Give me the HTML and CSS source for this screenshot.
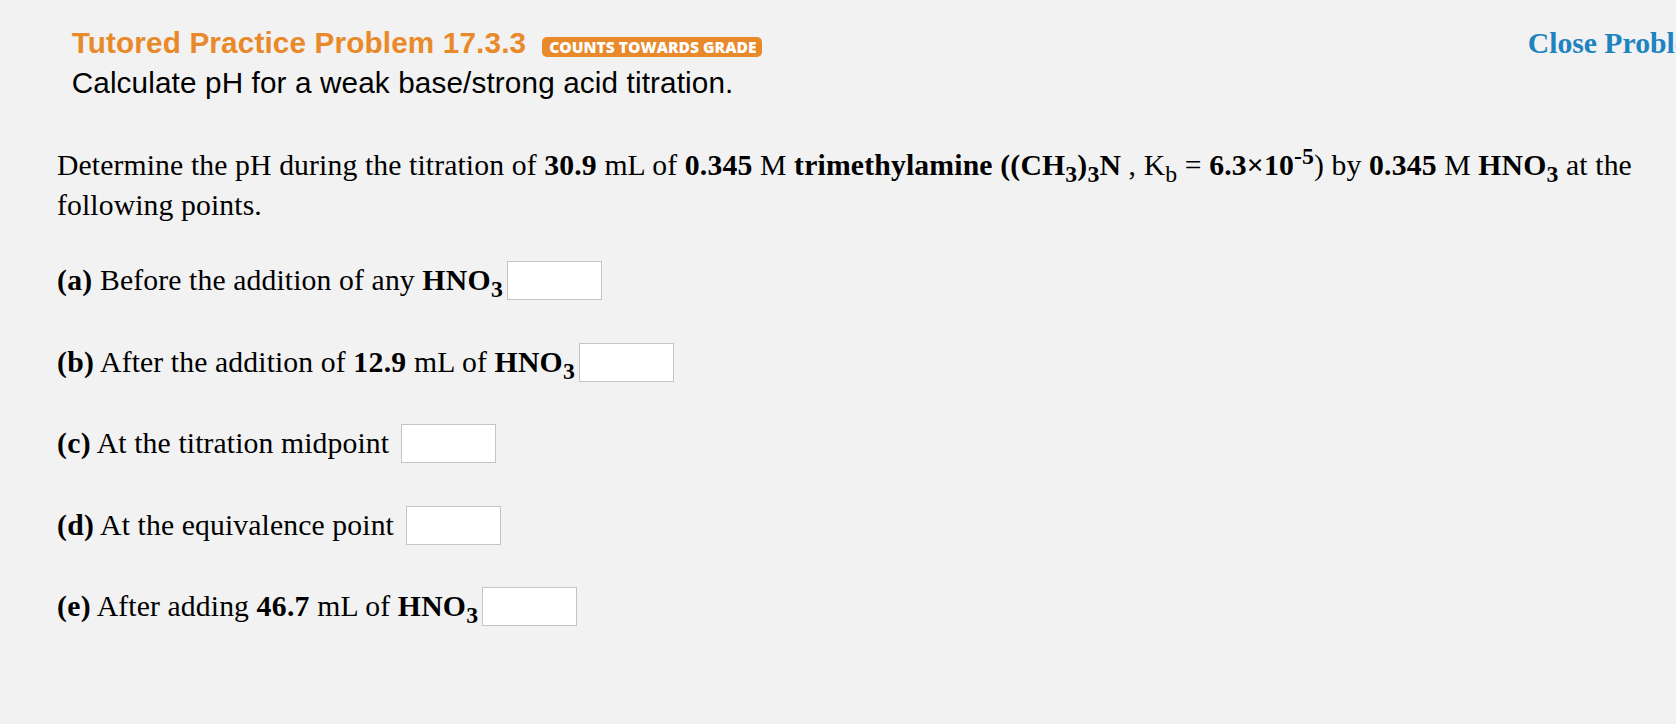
FILE: index.html
```html
<!DOCTYPE html>
<html lang="en">
<head>
<meta charset="utf-8">
<title>Tutored Practice Problem 17.3.3</title>
<link rel="stylesheet" href="styles.css">
</head>
<body>
<div class="page">
  <header class="header">
    <div class="titles">
      <div class="title-line"><span class="title">Tutored Practice Problem 17.3.3</span><span class="badge">COUNTS TOWARDS GRADE</span></div>
      <div class="subtitle">Calculate pH for a weak base/strong acid titration.</div>
    </div>
    <a class="close-link" href="#">Close Problem</a>
  </header>

  <div class="question">
    <p class="intro">Determine the pH during the titration of <b>30.9</b> mL of <b>0.345</b> M <b>trimethylamine ((CH<sub>3</sub>)<sub>3</sub>N</b> , K<sub>b</sub> = <b>6.3×10<sup>-5</sup></b>) by <b>0.345</b> M <b>HNO<sub>3</sub></b> at the following points.</p>

    <p class="part"><b>(a)</b> Before the addition of any <b>HNO<sub>3</sub></b><input class="answer" type="text"></p>
    <p class="part"><b>(b)</b> After the addition of <b>12.9</b> mL of <b>HNO<sub>3</sub></b><input class="answer" type="text"></p>
    <p class="part"><b>(c)</b> At the titration midpoint <input class="answer" type="text"></p>
    <p class="part"><b>(d)</b> At the equivalence point <input class="answer" type="text"></p>
    <p class="part"><b>(e)</b> After adding <b>46.7</b> mL of <b>HNO<sub>3</sub></b><input class="answer" type="text"></p>
  </div>
</div>
</body>
</html>
```

FILE: styles.css
```css
html, body {
  margin: 0;
  padding: 0;
  overflow: hidden;
  background: #f2f2f2;
}

.page {
  padding-left: 57px;
}

.header {
  display: grid;
  grid-template-columns: 1456px max-content;
  padding: 23px 0 0 14.7px;
}

.titles {
  font-family: "Liberation Sans", Arial, sans-serif;
  font-size: 29.7px;
  line-height: 40px;
  color: #000;
}

.title {
  font-weight: bold;
  color: #e8892a;
  letter-spacing: 0.15px;
}

.subtitle {
  letter-spacing: 0.13px;
}

.badge {
  display: inline-block;
  margin-left: 16px;
  padding: 0 6px 0 7px;
  background: #e8892a;
  color: #fff;
  border-radius: 5px;
  font-family: "Open Sans", sans-serif;
  font-weight: 800;
  font-size: 15.6px;
  line-height: 20px;
  height: 20px;
  vertical-align: baseline;
}

.close-link {
  margin-top: 0;
  font-family: "Liberation Serif", "Times New Roman", serif;
  font-weight: bold;
  font-size: 29.7px;
  line-height: 40px;
  color: #1e84c1;
  text-decoration: none;
  white-space: nowrap;
}

.question {
  font-family: "Liberation Serif", "Times New Roman", serif;
  font-size: 29.7px;
  line-height: 37.7px;
  letter-spacing: 0.12px;
  color: #000;
}

.question b {
  letter-spacing: 0.3px;
}

.question .intro b {
  letter-spacing: 0.17px;
}

.question sub,
.question sup {
  line-height: 0;
  font-size: 0.8em;
}

.intro {
  margin: 42px 0 0;
  line-height: 40px;
}

.part {
  margin: 43.6px 0 0;
}

.intro + .part {
  margin-top: 37px;
}

.answer {
  display: inline-block;
  vertical-align: top;
  box-sizing: border-box;
  width: 95px;
  height: 39px;
  margin: -1px 0 0 4px;
  padding: 0 6px;
  border: 1px solid #c4c4c4;
  background: #fff;
  font: inherit;
}
```
